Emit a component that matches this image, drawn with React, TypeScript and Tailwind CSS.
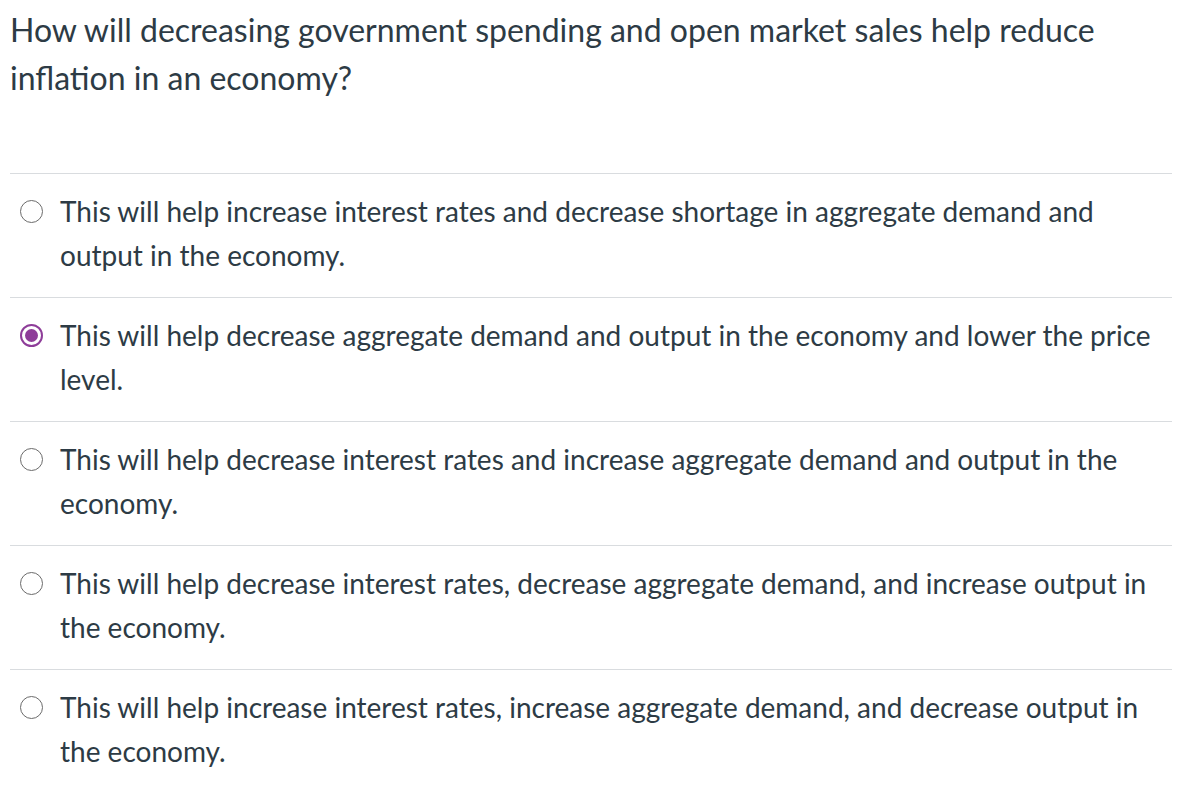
const options = [
  'This will help increase interest rates and decrease shortage in aggregate demand and output in the economy.',
  'This will help decrease aggregate demand and output in the economy and lower the price level.',
  'This will help decrease interest rates and increase aggregate demand and output in the economy.',
  'This will help decrease interest rates, decrease aggregate demand, and increase output in the economy.',
  'This will help increase interest rates, increase aggregate demand, and decrease output in the economy.',
];

function Radio({ checked }: { checked: boolean }) {
  if (checked) {
    return (
      <span className="flex h-[23px] w-[23px] shrink-0 items-center justify-center rounded-full border-[2.5px] border-[#8e3d99] bg-white">
        <span className="h-[13px] w-[13px] rounded-full bg-[#8e3d99]" />
      </span>
    );
  }
  return <span className="h-[23px] w-[23px] shrink-0 rounded-full border-[1.5px] border-[#6b6b6b] bg-white" />;
}

export default function App() {
  const selected = 1;

  return (
    <div className="min-h-[800px] bg-white pl-[10px] pr-[6px] pt-[6px] text-[#2d3b45] font-['Lato','Noto_Sans',sans-serif]">
      <p className="text-[32px] leading-[48px]">
        How will decreasing government spending and open market sales help reduce inflation in an economy?
      </p>

      <div className="mt-[71px]">
        {options.map((text, i) => (
          <div key={i} className="border-t border-[#d9dcdf]">
            <label className="flex items-start gap-[17px] pt-[15px] pb-[20px] pl-[10px]">
              <span className="flex h-[44px] items-center">
                <Radio checked={i === selected} />
              </span>
              <span className="text-[28px] leading-[44px]">{text}</span>
            </label>
          </div>
        ))}
      </div>
    </div>
  );
}
